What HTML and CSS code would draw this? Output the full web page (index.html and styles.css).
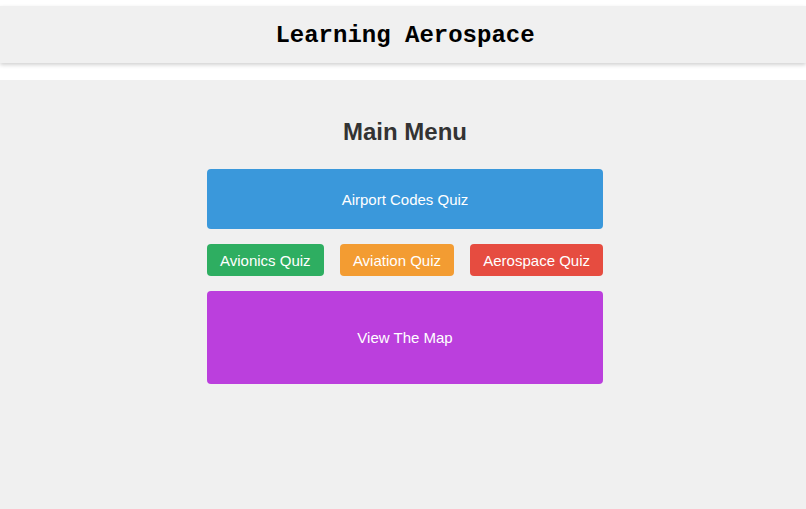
FILE: index.html
```html
<!DOCTYPE html>
<html lang="en">
<head>
  <meta charset="UTF-8" />
  <meta name="viewport" content="width=device-width, initial-scale=1.0" />
  <title>Learning Aerospace</title>
  <link rel="stylesheet" href="styles.css">
</head>
<body>
  <!-- ===== Header ===== -->
  <header class="site-header">
    <h1>Learning Aerospace</h1>
  </header>

  <!-- ===== Menu ===== -->
  <main class="menu">
    <h2>Main Menu</h2>
    <div class="menu-buttons">
      <button class="btn btn-blue btn-wide">Airport Codes Quiz</button>
      <div class="btn-row">
        <button class="btn btn-green">Avionics Quiz</button>
        <button class="btn btn-orange">Aviation Quiz</button>
        <button class="btn btn-red">Aerospace Quiz</button>
      </div>
      <button class="btn btn-purple btn-map">View The Map</button>
    </div>
  </main>
</body>
</html>
```

FILE: styles.css
```css
:root {
  --bg: #f0f0f0;
  --blue: #3a98db;
  --green: #2eae61;
  --orange: #f39c32;
  --red: #e64c40;
  --purple: #bb3fdd;
}

/* ===== Reset ===== */
*, *::before, *::after { box-sizing: border-box; }
html, body { height: 100%; }
body {
  margin: 0;
  background: #fff;
  font-family: "Liberation Sans", Arial, sans-serif;
  color: #333;
  display: flex;
  flex-direction: column;
}

/* ===== Header ===== */
.site-header {
  margin-top: 6px;
  height: 57px;
  padding: 2px 0 0 4px;
  background: var(--bg);
  box-shadow: 0 2px 4px rgba(0,0,0,.18);
  display: flex;
  align-items: center;
  justify-content: center;
}
.site-header h1 {
  margin: 0;
  font-family: "Liberation Mono", "Courier New", monospace;
  font-size: 24px;
  font-weight: bold;
  color: #000;
}

/* ===== Menu ===== */
.menu {
  flex: 1;
  margin-top: 17px;
  background: var(--bg);
  padding: 38px 0 0 4px;
  display: flex;
  flex-direction: column;
  align-items: center;
}
.menu h2 {
  margin: 0 0 23px;
  font-size: 24px;
  line-height: 28px;
  color: #333;
}
.menu-buttons {
  width: 396px;
  display: flex;
  flex-direction: column;
  gap: 15px;
}
.btn-row {
  display: flex;
  justify-content: space-between;
}

.btn {
  border: none;
  border-radius: 4px;
  color: #fff;
  font-family: "Liberation Sans", Arial, sans-serif;
  font-size: 15px;
  padding: 0 13px;
  height: 32px;
  cursor: pointer;
}
.btn-wide { height: 60px; }
.btn-map  { height: 93px; }

.btn-blue   { background: var(--blue); }
.btn-green  { background: var(--green); }
.btn-orange { background: var(--orange); }
.btn-red    { background: var(--red); }
.btn-purple { background: var(--purple); }
```
